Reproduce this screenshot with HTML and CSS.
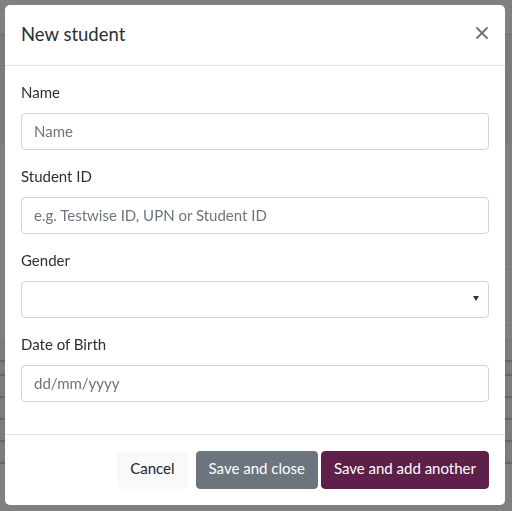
FILE: index.html
```html
<!DOCTYPE html>
<html lang="en">
<head>
<meta charset="utf-8">
<title>New student</title>
<link rel="stylesheet" href="styles.css">
</head>
<body>
<div class="page">
  <div class="page-top"></div>
  <div class="page-band"></div>
  <div class="page-gap"></div>
  <div class="page-row light"></div>
  <div class="page-row"></div>
  <div class="page-row dark"></div>
  <div class="page-row dark short"></div>
  <div class="page-row dark"></div>
  <div class="page-row dark"></div>
  <div class="page-row dark"></div>
  <div class="page-row dark"></div>
</div>
<div class="backdrop">
  <div class="modal" role="dialog" aria-labelledby="modal-title">
    <div class="modal-header">
      <h5 class="modal-title" id="modal-title">New student</h5>
      <button class="close" type="button" aria-label="Close">
        <svg width="12" height="12" viewBox="0 0 12 12" aria-hidden="true"><path d="M1 1L11 11M11 1L1 11" stroke="#707070" stroke-width="1.8" stroke-linecap="round" fill="none"/></svg>
      </button>
    </div>
    <div class="modal-body">
      <div class="form-group">
        <label class="form-label" for="f-name">Name</label>
        <input class="form-control" id="f-name" type="text" placeholder="Name">
      </div>
      <div class="form-group">
        <label class="form-label" for="f-id">Student ID</label>
        <input class="form-control" id="f-id" type="text" placeholder="e.g. Testwise ID, UPN or Student ID">
      </div>
      <div class="form-group">
        <label class="form-label" for="f-gender">Gender</label>
        <div class="select-wrap">
          <select class="form-control select" id="f-gender">
            <option></option>
            <option>Female</option>
            <option>Male</option>
          </select>
          <span class="caret"></span>
        </div>
      </div>
      <div class="form-group">
        <label class="form-label" for="f-dob">Date of Birth</label>
        <input class="form-control" id="f-dob" type="text" placeholder="dd/mm/yyyy">
      </div>
    </div>
    <div class="modal-footer">
      <button class="btn btn-light" type="button">Cancel</button>
      <button class="btn btn-secondary" type="button">Save and close</button>
      <button class="btn btn-primary" type="button">Save and add another</button>
    </div>
  </div>
</div>
</body>
</html>
```
FILE: styles.css
```css
* { box-sizing: border-box; }
html, body { margin: 0; padding: 0; }
body {
  font-family: Lato, "Noto Sans", "Liberation Sans", sans-serif;
  font-size: 15px;
  color: #212529;
  background: #808080;
  width: 512px;
  height: 511px;
  overflow: hidden;
}
.page { display: flex; flex-direction: column; }
.page-top { height: 35px; border-bottom: 1px solid #6d6d6d; }
.page-band { height: 110px; background: #7b7b7b; }
.page-gap { height: 125px; border-bottom: 1px solid #777; }
.page-row { height: 14px; border-bottom: 1px solid #777; }
.page-row.light { height: 56px; background: #808080; }
.page-row.dark { height: 22px; border-bottom: 2px solid #666; background: #7c7c7c; }
.page-row.short { height: 14px; }

.backdrop {
  position: fixed;
  inset: 0;
  padding: 5px;
  display: flex;
  align-items: flex-start;
}
.modal {
  width: 500px;
  height: 500px;
  background: #fff;
  border-radius: 5px;
  display: flex;
  flex-direction: column;
}
.modal-header {
  height: 61px;
  flex: none;
  padding: 15px 16px 17px 16px;
  border-bottom: 1px solid #dee2e6;
  display: flex;
  align-items: center;
  justify-content: space-between;
}
.modal-title {
  margin: 0;
  font-size: 18.5px;
  font-weight: 400;
  line-height: 28px;
  color: #2b2f33;
}
.close {
  border: 0;
  background: none;
  padding: 0;
  margin: 0 1px 2px 0;
  width: 12px;
  height: 12px;
  display: flex;
}
.modal-body {
  padding: 15px 16px 17px 16px;
  flex: 1;
  min-height: 0;
}
.form-group {
  display: flex;
  flex-direction: column;
  margin-bottom: 15px;
}
.form-label {
  line-height: 22px;
  margin-bottom: 10px;
  color: #2b2f33;
}
.form-control {
  display: block;
  width: 100%;
  height: 37px;
  padding: 0 12px 1px 12px;
  font-family: inherit;
  font-size: 15px;
  color: #495057;
  background: #fff;
  border: 1px solid #ced4da;
  border-radius: 4px;
  margin: 0;
  outline: none;
}
.form-control::placeholder { color: #6c757d; opacity: 1; }
.select-wrap { position: relative; }
.select { appearance: none; -webkit-appearance: none; }
.caret {
  position: absolute;
  right: 10px;
  top: 15px;
  width: 0;
  height: 0;
  border-left: 3px solid transparent;
  border-right: 3px solid transparent;
  border-top: 5px solid #333;
}
.modal-footer {
  height: 71px;
  flex: none;
  border-top: 1px solid #dee2e6;
  padding: 16px 16px 16px 16px;
  display: flex;
  justify-content: flex-end;
  align-items: flex-start;
}
.btn {
  height: 38px;
  padding: 0 12px 3px 12px;
  font-family: inherit;
  font-size: 15px;
  border: 1px solid transparent;
  border-radius: 4px;
  line-height: 33px;
  cursor: pointer;
}
.btn-light { background: #f8f9fa; border-color: #f8f9fa; color: #212529; margin-right: 8px; }
.btn-secondary { background: #6c757d; border-color: #6c757d; color: #fff; margin-right: 3px; }
.btn-primary { background: #5e1f4a; border-color: #5e1f4a; color: #fff; }
```
